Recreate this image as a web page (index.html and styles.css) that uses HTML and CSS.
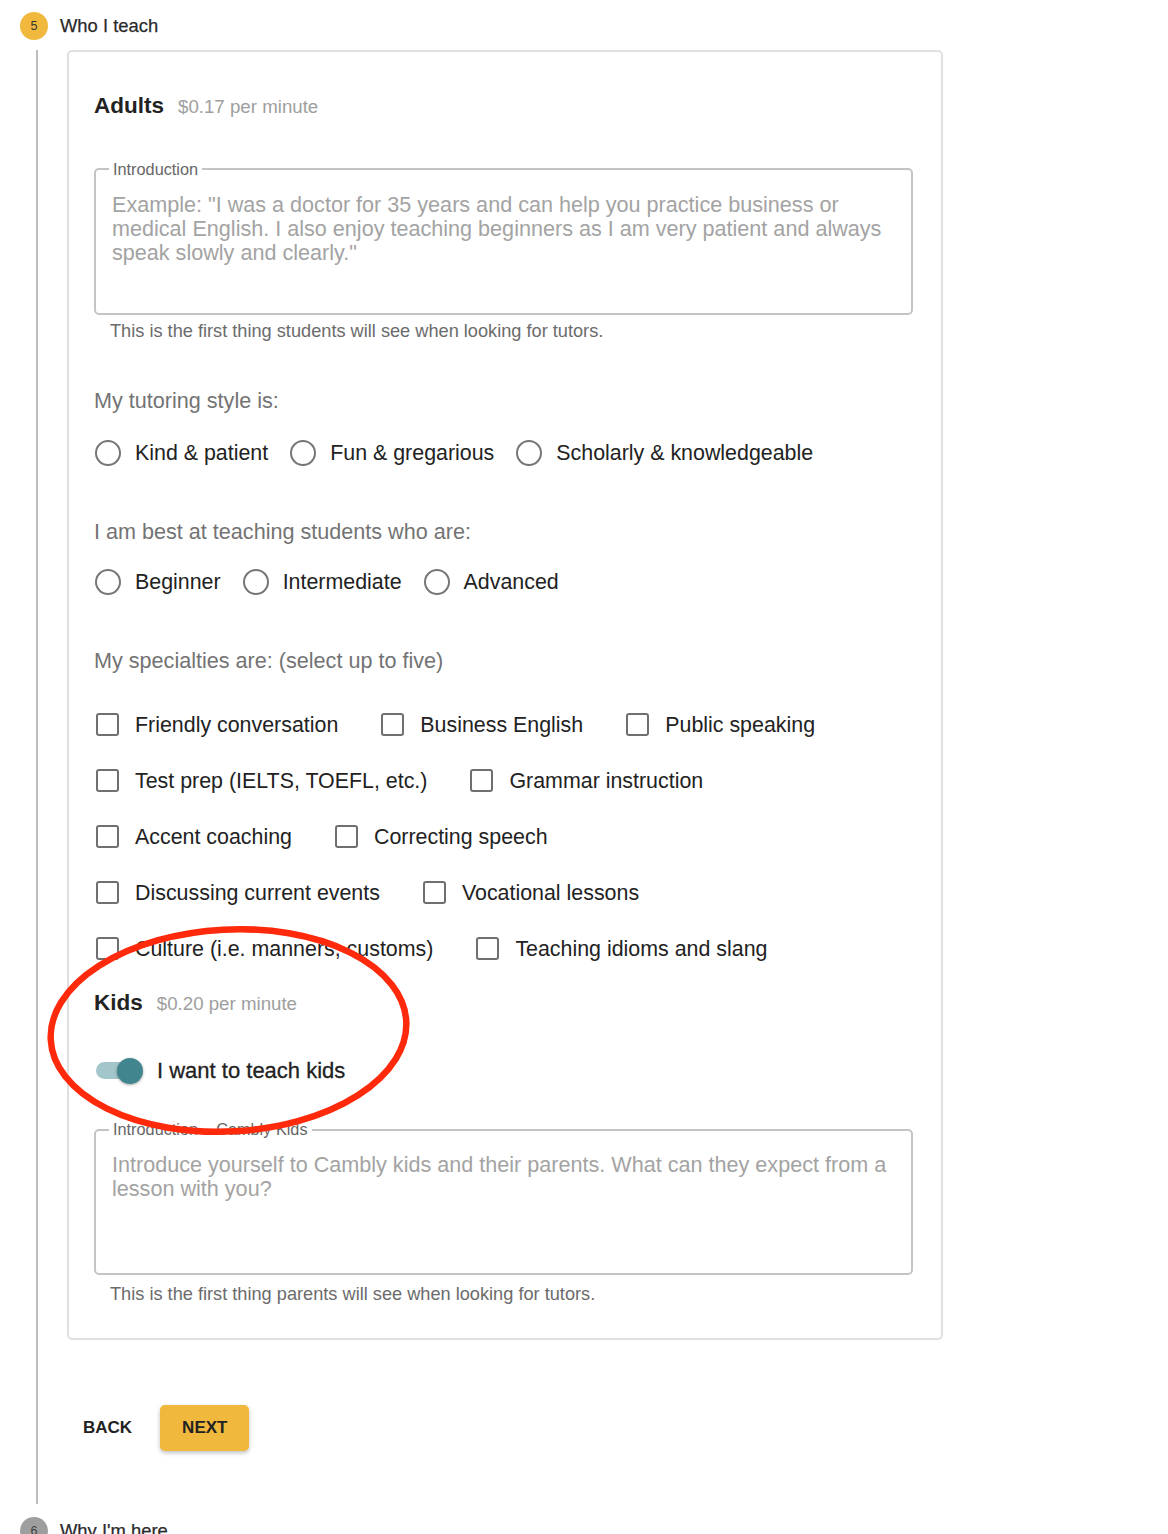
FILE: index.html
```html
<!DOCTYPE html>
<html lang="en">
<head>
<meta charset="utf-8">
<title>Who I teach</title>
<link rel="stylesheet" href="styles.css">
</head>
<body>
<div class="stepper">
  <div class="step">
    <div class="step-head">
      <span class="step-icon step-icon--active">5</span>
      <span class="step-label">Who I teach</span>
    </div>
    <div class="step-body">
      <div class="card">
        <h2 class="group-title">Adults<span class="rate">$0.17 per minute</span></h2>
        <fieldset class="intro">
          <legend>Introduction</legend>
          <textarea placeholder="Example: &quot;I was a doctor for 35 years and can help you practice business or medical English. I also enjoy teaching beginners as I am very patient and always speak slowly and clearly.&quot;"></textarea>
        </fieldset>
        <p class="helper">This is the first thing students will see when looking for tutors.</p>

        <p class="question question--first">My tutoring style is:</p>
        <div class="options options--radio options--first">
          <label class="option"><input type="radio" name="style" class="radio"><span>Kind &amp; patient</span></label>
          <label class="option"><input type="radio" name="style" class="radio"><span>Fun &amp; gregarious</span></label>
          <label class="option"><input type="radio" name="style" class="radio"><span>Scholarly &amp; knowledgeable</span></label>
        </div>

        <p class="question">I am best at teaching students who are:</p>
        <div class="options options--radio">
          <label class="option"><input type="radio" name="level" class="radio"><span>Beginner</span></label>
          <label class="option"><input type="radio" name="level" class="radio"><span>Intermediate</span></label>
          <label class="option"><input type="radio" name="level" class="radio"><span>Advanced</span></label>
        </div>

        <p class="question">My specialties are: (select up to five)</p>
        <div class="options options--check">
          <label class="option"><input type="checkbox" class="box"><span>Friendly conversation</span></label>
          <label class="option"><input type="checkbox" class="box"><span>Business English</span></label>
          <label class="option"><input type="checkbox" class="box"><span>Public speaking</span></label>
          <label class="option"><input type="checkbox" class="box"><span>Test prep (IELTS, TOEFL, etc.)</span></label>
          <label class="option"><input type="checkbox" class="box"><span>Grammar instruction</span></label>
          <label class="option"><input type="checkbox" class="box"><span>Accent coaching</span></label>
          <label class="option"><input type="checkbox" class="box"><span>Correcting speech</span></label>
          <label class="option"><input type="checkbox" class="box"><span>Discussing current events</span></label>
          <label class="option"><input type="checkbox" class="box"><span>Vocational lessons</span></label>
          <label class="option"><input type="checkbox" class="box"><span>Culture (i.e. manners, customs)</span></label>
          <label class="option"><input type="checkbox" class="box"><span>Teaching idioms and slang</span></label>
        </div>

        <h2 class="group-title group-title--kids">Kids<span class="rate">$0.20 per minute</span></h2>
        <div class="toggle-row">
          <span class="switch"><span class="switch-track"></span><span class="switch-thumb"></span></span>
          <span class="toggle-label">I want to teach kids</span>
        </div>
        <fieldset class="intro intro--kids">
          <legend>Introduction – Cambly Kids</legend>
          <textarea placeholder="Introduce yourself to Cambly kids and their parents. What can they expect from a lesson with you?"></textarea>
        </fieldset>
        <p class="helper helper--kids">This is the first thing parents will see when looking for tutors.</p>

        <svg class="annotation" viewBox="0 0 380 225" aria-hidden="true">
          <ellipse cx="188.5" cy="110.5" rx="178" ry="101" transform="rotate(-3 188.5 110.5)" fill="none" stroke="#ff2a0c" stroke-width="6.5"/>
        </svg>
      </div>
      <div class="actions">
        <button class="btn">BACK</button>
        <button class="btn btn--primary">NEXT</button>
      </div>
    </div>
  </div>
  <div class="step step--next">
    <div class="step-head">
      <span class="step-icon step-icon--inactive">6</span>
      <span class="step-label">Why I'm here</span>
    </div>
  </div>
</div>
</body>
</html>
```

FILE: styles.css
```css
* { box-sizing: border-box; }

body {
  margin: 0;
  background: #fff;
  font-family: "Liberation Sans", Arial, Helvetica, sans-serif;
  color: #222;
}

.stepper { padding: 12px 0 0 20px; }

.step-head {
  display: flex;
  align-items: center;
  height: 28px;
}

.step-icon {
  width: 28px;
  height: 28px;
  border-radius: 50%;
  display: flex;
  align-items: center;
  justify-content: center;
  font-size: 12.5px;
  flex: none;
}
.step-icon--active { background: #f0b93d; color: #333; }
.step-icon--inactive { background: #9e9e9e; color: #444; }

.step-label {
  margin-left: 12px;
  font-size: 18.4px;
  color: #2b2b2b;
  -webkit-text-stroke: 0.25px #2b2b2b;
}

.step-body {
  margin: 10px 0 0 16px;
  border-left: 2px solid #bdbdbd;
  padding: 0 0 53px 29px;
}

.step--next { margin-top: 13px; }

.card {
  position: relative;
  width: 876px;
  border: 2px solid #e0e0e0;
  border-radius: 5px;
  padding: 40px 28px 31px 25px;
}

.group-title {
  margin: 0;
  display: flex;
  align-items: baseline;
  font-size: 22.5px;
  line-height: 27px;
  font-weight: 700;
  color: #222;
}
.group-title--kids { margin-top: 27px; }

.rate {
  margin-left: 14px;
  font-size: 18.7px;
  font-weight: 400;
  color: #9e9e9e;
}

.intro {
  margin: 39.5px 0 0;
  padding: 14px 10px 17px 16px;
  border: 2px solid #c4c4c4;
  border-radius: 5px;
  min-width: 0;
}
.intro--kids { margin-top: 36.7px; }

.intro legend {
  padding: 0 4px;
  margin-left: -3px;
  font-size: 16.3px;
  line-height: 19px;
  color: #666;
}

.intro textarea {
  display: block;
  width: 100%;
  height: 103px;
  margin: 0;
  padding: 0;
  border: 0;
  resize: none;
  overflow: hidden;
  outline: none;
  background: transparent;
  font-family: inherit;
  font-size: 21.6px;
  line-height: 24px;
  color: #222;
}
.intro textarea::placeholder { color: #a3a3a3; opacity: 1; }

.helper {
  margin: 5px 0 0 16px;
  font-size: 18.2px;
  line-height: 23.66px;
  color: #6b6b6b;
}
.helper--kids { margin-top: 8px; }

.question {
  margin: 52.5px 0 0;
  font-size: 21.6px;
  line-height: 26px;
  color: #737373;
}
.question--first { margin-top: 44.5px; }

.options {
  display: flex;
  flex-wrap: wrap;
  margin-top: 24.5px;
}
.options--first { margin-top: 26.5px; }
.options--radio { column-gap: 21px; }
.options--check {
  column-gap: 41px;
  row-gap: 30px;
  max-width: 760px;
  margin-top: 38px;
}

.option {
  display: flex;
  align-items: center;
  height: 26px;
  font-size: 21.4px;
  line-height: 26px;
  color: #222;
  white-space: nowrap;
}

.radio {
  appearance: none;
  -webkit-appearance: none;
  flex: none;
  width: 26px;
  height: 26px;
  margin: 0 14px 0 1px;
  border: 2px solid #767676;
  border-radius: 50%;
  background: #fff;
}

.box {
  appearance: none;
  -webkit-appearance: none;
  flex: none;
  width: 23px;
  height: 23px;
  margin: 0 16px 0 2px;
  border: 2px solid #6f6f6f;
  border-radius: 3px;
  background: #fff;
}

.toggle-row {
  display: flex;
  align-items: center;
  height: 26px;
  margin-top: 41px;
}

.switch {
  position: relative;
  flex: none;
  width: 47px;
  height: 26px;
  margin-left: 2px;
}
.switch-track {
  position: absolute;
  left: 0;
  top: 4.5px;
  width: 42px;
  height: 17px;
  border-radius: 9px;
  background: #a3c6ca;
}
.switch-thumb {
  position: absolute;
  right: 0;
  top: 0;
  width: 26px;
  height: 26px;
  border-radius: 50%;
  background: #41858f;
  box-shadow: 0 1px 3px rgba(0, 0, 0, 0.35);
}

.toggle-label {
  margin-left: 14px;
  font-size: 22px;
  line-height: 26px;
  color: #222;
  -webkit-text-stroke: 0.3px #222;
}

.annotation {
  position: absolute;
  left: -29px;
  top: 868px;
  width: 380px;
  height: 225px;
  pointer-events: none;
}

.actions {
  display: flex;
  align-items: center;
  gap: 12px;
  margin-top: 64.7px;
}

.btn {
  height: 46px;
  padding: 0 16px;
  border: 0;
  border-radius: 5px;
  background: transparent;
  font-family: inherit;
  font-size: 17px;
  font-weight: 700;
  line-height: 46px;
  color: #222;
}
.btn--primary {
  padding: 0 22px;
  background: #f0b93d;
  box-shadow: 0 2px 4px rgba(0, 0, 0, 0.25);
}
```
